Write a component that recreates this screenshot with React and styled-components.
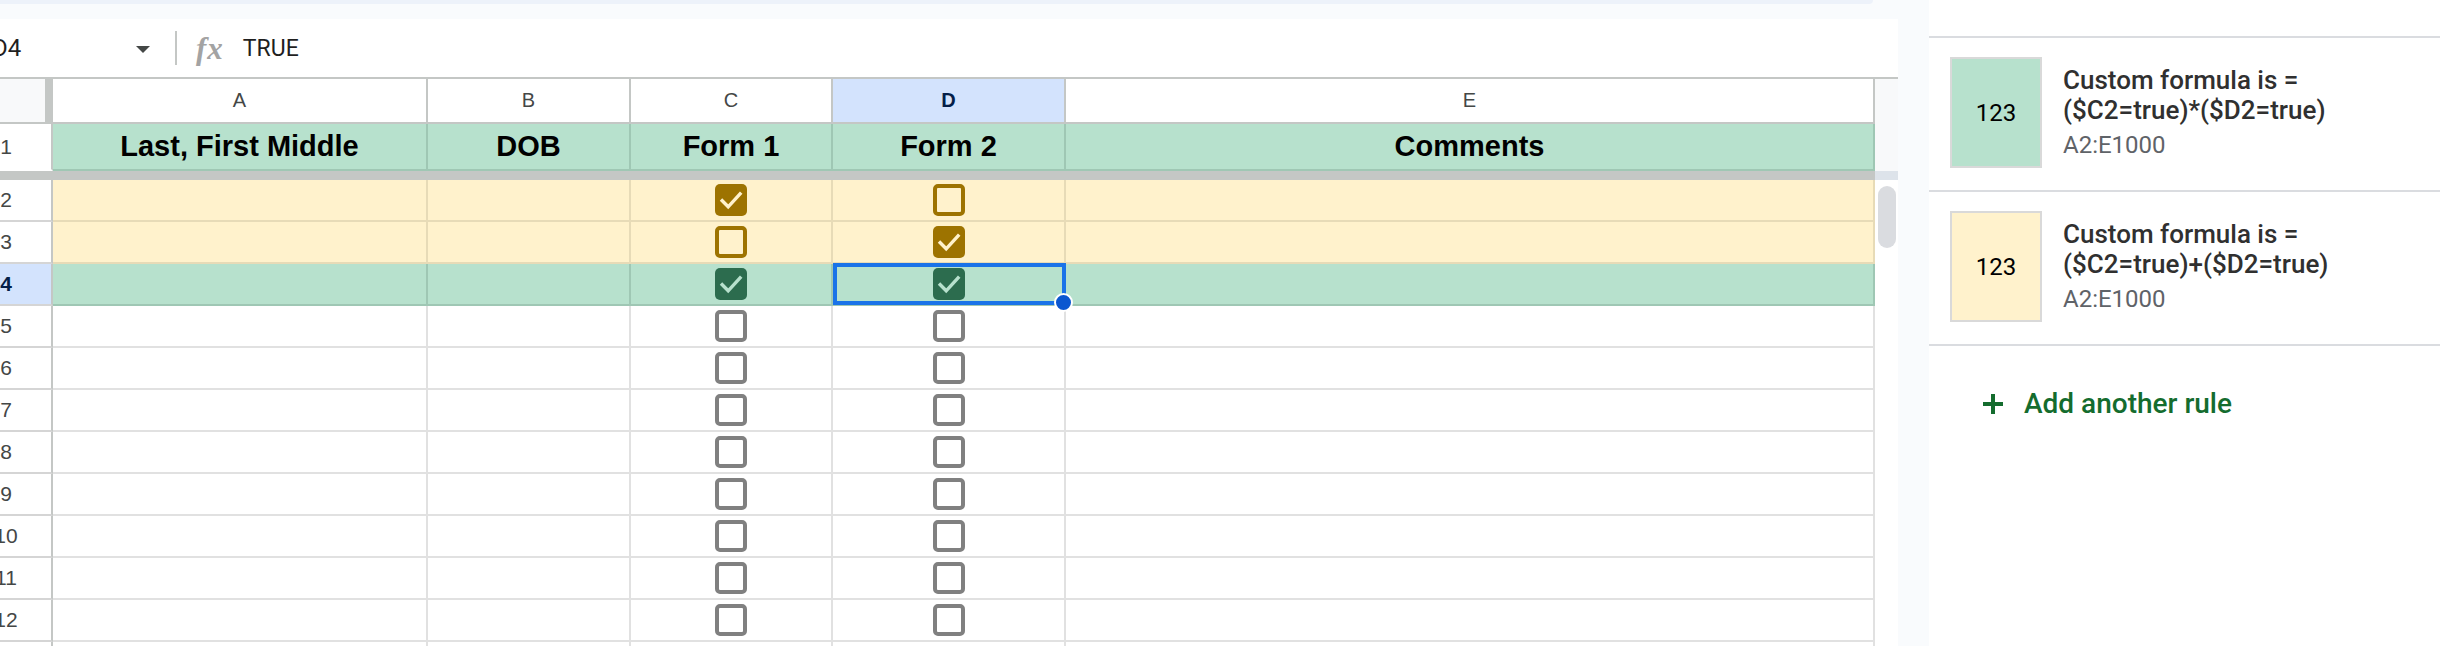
import React from 'react'
import styled, { createGlobalStyle } from 'styled-components'

const GlobalStyle = createGlobalStyle`
  html, body {
    margin: 0;
    padding: 0;
  }
  body {
    width: 2440px;
    height: 646px;
    overflow: hidden;
    background: #f9fbfd;
    font-family: "Liberation Sans", Arial, sans-serif;
  }
  * {
    box-sizing: border-box;
  }
`

const COLUMNS = [
  { key: 'A', width: 375, title: 'Last, First Middle' },
  { key: 'B', width: 203, title: 'DOB' },
  { key: 'C', width: 202, title: 'Form 1' },
  { key: 'D', width: 233, title: 'Form 2' },
  { key: 'E', width: 809, title: 'Comments' }
]

const GRID_COLS = `53px ${COLUMNS.map(c => `${c.width}px`).join(' ')}`

const TONES = {
  plain: { bg: '#ffffff', line: '#e1e1e1', box: '#808080', tick: '#ffffff' },
  yellow: { bg: '#fff2cc', line: '#e7dbb7', box: '#9d7300', tick: '#fff2cc' },
  green: { bg: '#b7e1cd', line: '#9fc7b4', box: '#2c6c4e', tick: '#b7e1cd' }
}

const ROWS = [
  { n: 2, tone: 'yellow', c: true, d: false },
  { n: 3, tone: 'yellow', c: false, d: true },
  { n: 4, tone: 'green', c: true, d: true, active: true },
  ...[5, 6, 7, 8, 9, 10, 11, 12, 13].map(n => ({ n, tone: 'plain', c: false, d: false }))
]

const RULES = [
  { swatch: '#b7e1cd', formula: '($C2=true)*($D2=true)', range: 'A2:E1000' },
  { swatch: '#fff2cc', formula: '($C2=true)+($D2=true)', range: 'A2:E1000' }
]

const Page = styled.div`
  display: flex;
  width: 2440px;
  height: 646px;
  overflow: hidden;
`

const Workbook = styled.div`
  width: 1898px;
  flex-shrink: 0;
  display: flex;
  flex-direction: column;
  min-height: 0;
`

const ToolbarEdge = styled.div`
  flex-shrink: 0;
  width: 1873px;
  height: 4px;
  background: #edf2fa;
  border-bottom-right-radius: 4px;
`

const FormulaBar = styled.div`
  flex-shrink: 0;
  margin-top: 15px;
  height: 58px;
  background: #ffffff;
  display: flex;
  align-items: center;
  color: #1f1f1f;
`

const NameBox = styled.div`
  width: 175px;
  display: flex;
  align-items: center;
  font-family: Roboto, "Liberation Sans", sans-serif;
  font-size: 24px;
`

const NameText = styled.span`
  margin-left: -8px;
`

const Caret = styled.span`
  margin-left: auto;
  margin-right: 25px;
  margin-top: 3px;
  width: 0;
  height: 0;
  border-left: 7px solid transparent;
  border-right: 7px solid transparent;
  border-top: 7px solid #444746;
`

const BarDivider = styled.span`
  width: 2px;
  height: 34px;
  background: #c4c7c5;
`

const FxMark = styled.span`
  margin-left: 19px;
  font-family: "Liberation Serif", "Times New Roman", serif;
  font-style: italic;
  font-weight: 700;
  font-size: 31px;
  letter-spacing: 1px;
  color: #a3a3a3;
  line-height: 1;
`

const FormulaText = styled.span`
  margin-left: 19px;
  font-family: Roboto, "Liberation Sans", sans-serif;
  font-size: 23px;
`

const SheetArea = styled.div`
  display: flex;
  flex: 1;
  min-height: 0;
  overflow: hidden;
`

const Grid = styled.div`
  width: 1875px;
  flex-shrink: 0;
  display: flex;
  flex-direction: column;
`

const Row = styled.div`
  display: grid;
  grid-template-columns: ${GRID_COLS};
  height: ${p => p.$height}px;
  flex-shrink: 0;
`

const HeaderRow = styled(Row)`
  border-top: 2px solid #c4c7c5;
`

const Corner = styled.div`
  background: #f8f9fa;
  border-right: 8px solid #c4c7c5;
  border-bottom: 2px solid #c4c7c5;
`

const ColHead = styled.div`
  display: flex;
  align-items: center;
  justify-content: center;
  background: ${p => (p.$active ? '#d3e3fd' : '#ffffff')};
  color: ${p => (p.$active ? '#041e49' : '#444746')};
  font-weight: ${p => (p.$active ? 700 : 400)};
  font-size: 20px;
  border-right: 2px solid #c4c7c5;
  border-bottom: 2px solid #c4c7c5;
`

const RowHead = styled.div`
  overflow: hidden;
  display: flex;
  align-items: center;
  background: ${p => (p.$active ? '#d3e3fd' : '#ffffff')};
  color: ${p => (p.$active ? '#041e49' : '#444746')};
  font-weight: ${p => (p.$active ? 700 : 400)};
  font-size: 21px;
  border-right: 2px solid #c4c7c5;
  border-bottom: 2px solid ${p => (p.$last ? 'transparent' : '#d5d5d5')};
`

const RowNum = styled.span`
  flex-shrink: 0;
  width: 94px;
  margin-left: -41px;
  text-align: center;
`

const Cell = styled.div`
  position: relative;
  display: flex;
  align-items: center;
  justify-content: center;
  background: ${p => TONES[p.$tone].bg};
  border-right: 2px solid ${p => TONES[p.$tone].line};
  border-bottom: 2px solid ${p => TONES[p.$tone].line};
`

const TitleCell = styled(Cell)`
  font-weight: 700;
  font-size: 29px;
  color: #000000;
`

const FreezeBand = styled.div`
  height: 9px;
  flex-shrink: 0;
  background: #c4c7c5;
`

const Box = styled.span`
  width: 32px;
  height: 32px;
  border-radius: 5px;
  display: flex;
  align-items: center;
  justify-content: center;
  border: ${p => (p.$checked ? 'none' : `4px solid ${p.$color}`)};
  background: ${p => (p.$checked ? p.$color : 'transparent')};
`

const Selection = styled.div`
  position: absolute;
  top: -1px;
  left: 0;
  right: -2px;
  bottom: -1px;
  border: 4px solid #1a73e8;
  pointer-events: none;
  z-index: 2;
`

const FillHandle = styled.span`
  position: absolute;
  right: -11px;
  bottom: -11px;
  width: 19px;
  height: 19px;
  border-radius: 50%;
  background: #0b57d0;
  border: 2px solid #ffffff;
`

const ScrollColumn = styled.div`
  width: 23px;
  flex-shrink: 0;
  display: flex;
  flex-direction: column;
`

const ScrollHead = styled.div`
  flex-shrink: 0;
  height: 94px;
  background: #f8f9fa;
  border-top: 2px solid #c4c7c5;
`

const ScrollBand = styled.div`
  flex-shrink: 0;
  height: 9px;
  background: #dde3ea;
`

const ScrollTrack = styled.div`
  flex: 1;
  background: #ffffff;
  padding: 6px 2px 0 3px;
`

const Thumb = styled.div`
  height: 62px;
  border-radius: 9px;
  background: #dadce0;
`

const Sidebar = styled.aside`
  margin-left: 31px;
  flex: 1;
  background: #ffffff;
  padding-top: 36px;
  font-family: Roboto, "Liberation Sans", sans-serif;
`

const RuleCard = styled.div`
  display: flex;
  align-items: center;
  gap: 21px;
  padding: 19px 0 22px 21px;
  border-bottom: 2px solid #dadce0;
  &:first-child {
    border-top: 2px solid #dadce0;
  }
`

const Swatch = styled.div`
  width: 92px;
  height: 111px;
  flex-shrink: 0;
  display: flex;
  align-items: center;
  justify-content: center;
  background: ${p => p.$color};
  border: 2px solid #d9d9d9;
  font-size: 24px;
  color: #000000;
`

const RuleText = styled.div`
  display: flex;
  flex-direction: column;
`

const RuleTitle = styled.div`
  font-size: 26px;
  font-weight: 500;
  line-height: 30px;
  color: #303030;
`

const RuleRange = styled.div`
  margin-top: 5px;
  font-size: 24px;
  line-height: 30px;
  color: #5f6368;
`

const AddRule = styled.div`
  display: flex;
  align-items: center;
  gap: 21px;
  margin-top: 42px;
  padding-left: 54px;
  font-size: 28px;
  font-weight: 500;
  line-height: 32px;
  color: #146c2e;
`

const Checkbox = ({ tone, checked }) => {
  const t = TONES[tone]
  return (
    <Box $color={t.box} $checked={checked}>
      {checked && (
        <svg width="32" height="32" viewBox="0 0 32 32">
          <path d="M6 15.5l7.2 7.3L26.2 8.6" fill="none" stroke={t.tick} strokeWidth="3.4" />
        </svg>
      )}
    </Box>
  )
}

const DataRow = ({ row }) => (
  <Row $height={42}>
    <RowHead $active={row.active}>
      <RowNum>{row.n}</RowNum>
    </RowHead>
    <Cell $tone={row.tone} />
    <Cell $tone={row.tone} />
    <Cell $tone={row.tone}>
      <Checkbox tone={row.tone} checked={row.c} />
    </Cell>
    <Cell $tone={row.tone}>
      <Checkbox tone={row.tone} checked={row.d} />
      {row.active && (
        <Selection>
          <FillHandle />
        </Selection>
      )}
    </Cell>
    <Cell $tone={row.tone} />
  </Row>
)

const PlusIcon = () => (
  <svg width="20" height="20" viewBox="0 0 20 20">
    <path d="M10 0v20M0 10h20" stroke="#146c2e" strokeWidth="4" />
  </svg>
)

export default function App() {
  return (
    <>
      <GlobalStyle />
      <Page>
        <Workbook>
          <ToolbarEdge />
          <FormulaBar>
            <NameBox>
              <NameText>D4</NameText>
              <Caret />
            </NameBox>
            <BarDivider />
            <FxMark>fx</FxMark>
            <FormulaText>TRUE</FormulaText>
          </FormulaBar>
          <SheetArea>
            <Grid>
              <HeaderRow $height={47}>
                <Corner />
                {COLUMNS.map(c => (
                  <ColHead key={c.key} $active={c.key === 'D'}>
                    {c.key}
                  </ColHead>
                ))}
              </HeaderRow>
              <Row $height={47}>
                <RowHead $last>
                  <RowNum>1</RowNum>
                </RowHead>
                {COLUMNS.map(c => (
                  <TitleCell key={c.key} $tone="green">
                    {c.title}
                  </TitleCell>
                ))}
              </Row>
              <FreezeBand />
              {ROWS.map(r => (
                <DataRow key={r.n} row={r} />
              ))}
            </Grid>
            <ScrollColumn>
              <ScrollHead />
              <ScrollBand />
              <ScrollTrack>
                <Thumb />
              </ScrollTrack>
            </ScrollColumn>
          </SheetArea>
        </Workbook>
        <Sidebar>
          {RULES.map(rule => (
            <RuleCard key={rule.formula}>
              <Swatch $color={rule.swatch}>123</Swatch>
              <RuleText>
                <RuleTitle>Custom formula is =</RuleTitle>
                <RuleTitle>{rule.formula}</RuleTitle>
                <RuleRange>{rule.range}</RuleRange>
              </RuleText>
            </RuleCard>
          ))}
          <AddRule>
            <PlusIcon />
            Add another rule
          </AddRule>
        </Sidebar>
      </Page>
    </>
  )
}
